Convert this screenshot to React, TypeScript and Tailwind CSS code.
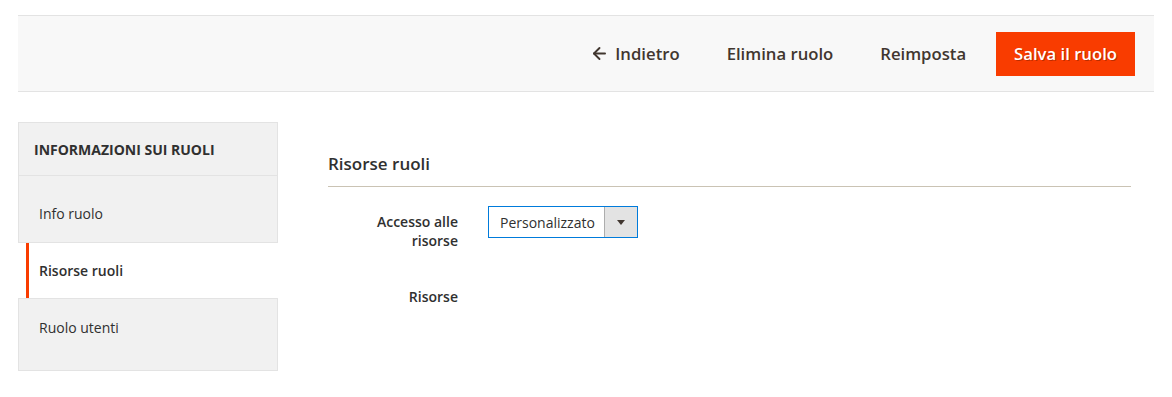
import { ArrowLeft } from "lucide-react";

const font = { fontFamily: '"Open Sans", "Liberation Sans", sans-serif' };

function NavItem({ label, active }: { label: string; active?: boolean }) {
  if (active) {
    return (
      <div className="-mx-px bg-white border-y border-[#e3e3e3] pl-[8px]">
        <div className="border-l-[3px] border-[#f93c00] h-[55px] flex items-center pl-[10px] text-[14px] font-semibold text-[#303030]">
          {label}
        </div>
      </div>
    );
  }
  return (
    <div className="pl-[8px]">
      <div className="h-[57px] flex items-center pl-[12px] text-[14px] text-[#303030]">{label}</div>
    </div>
  );
}

export default function App() {
  return (
    <div className="bg-white min-h-[397px] px-[18px] pt-[15px] w-[1172px]" style={font}>
      <div className="h-[77px] bg-[#f8f8f8] border-y border-[#e3e3e3] flex items-center justify-end pr-[19px] gap-[13px]">
        <button className="h-[44px] px-[17px] flex items-center gap-[6px] text-[16.7px] font-semibold text-[#41362f]">
          <ArrowLeft size={19} strokeWidth={2.4} />
          Indietro
        </button>
        <button className="h-[44px] px-[17px] text-[16.7px] font-semibold text-[#41362f]">Elimina ruolo</button>
        <button className="h-[44px] px-[17px] text-[16.7px] font-semibold text-[#41362f]">Reimposta</button>
        <button className="h-[44px] px-[18px] bg-[#f93c00] text-[16.7px] font-semibold text-white [text-shadow:1px_1px_0_rgba(0,0,0,0.25)]">
          Salva il ruolo
        </button>
      </div>

      <div className="flex mt-[30px] gap-[50px]">
        <div className="w-[260px] shrink-0 bg-[#f1f1f1] border border-[#e3e3e3] self-start">
          <div className="h-[53px] flex items-center px-[15px] border-b border-[#e3e3e3] text-[14px] font-bold uppercase text-[#303030]">
            Informazioni sui ruoli
          </div>
          <div className="pt-[9px] pb-[14px]">
            <NavItem label="Info ruolo" />
            <NavItem label="Risorse ruoli" active />
            <NavItem label="Ruolo utenti" />
          </div>
        </div>

        <div className="flex-1 pr-[23px] pt-[30px]">
          <div className="border-b border-[#cac3b4] pb-[10px] text-[17px] font-semibold text-[#303030] leading-[24px]">
            Risorse ruoli
          </div>
          <div className="mt-[19px] flex gap-[30px]">
            <div className="w-[130px] text-right text-[14px] font-semibold text-[#303030] leading-[19px] pt-[6px]">
              Accesso alle risorse
            </div>
            <div className="w-[150px] h-[32px] border border-[#007bdb] flex bg-white">
              <div className="flex-1 flex items-center pl-[11px] text-[14px] text-[#303030]">Personalizzato</div>
              <div className="w-[33px] bg-[#e3e3e3] border-l border-[#adadad] flex items-center justify-center">
                <svg width="8" height="5" viewBox="0 0 8 5">
                  <path d="M0 0h8L4 5z" fill="#41362f" />
                </svg>
              </div>
            </div>
          </div>
          <div className="mt-[37px] flex gap-[30px]">
            <div className="w-[130px] text-right text-[14px] font-semibold text-[#303030] leading-[19px]">Risorse</div>
          </div>
        </div>
      </div>
    </div>
  );
}
